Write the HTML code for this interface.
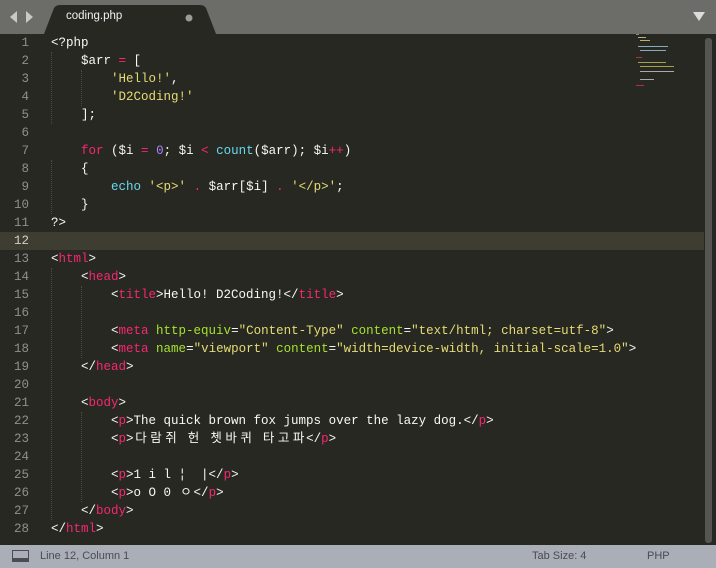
<!DOCTYPE html><html style="overflow:hidden;height:568px"><head><meta charset="utf-8"><style>
body{margin:0;width:716px;height:568px;overflow:hidden;background:#272822;position:relative;font-family:"Liberation Mono","Noto Sans CJK KR",monospace}
#tb{position:absolute;left:0;top:0;width:716px;height:34px;background:#6c6c68}
#st{position:absolute;left:0;top:545px;width:716px;height:23px;background:#aaaeb6;font-family:"Liberation Sans",sans-serif;font-size:11px;color:#4a4c52}
#st span{position:absolute;top:5px}
.ln{position:absolute;left:0;width:29px;text-align:right;color:#8f908a;font-size:12.5px;line-height:18px}
.code{position:absolute;left:51px;top:34px;font-size:12.5px;line-height:18px;color:#f8f8f2}
.code div{height:18px;white-space:pre}
.k{color:#f92672}.s{color:#e6db74}.c{color:#66d9ef}.n{color:#ae81ff}.a{color:#a6e22e}
.h{display:inline-block;width:15px;text-align:center}
.g{position:absolute;border-left:1px dotted #4a4b44;width:0}
</style></head><body>
<div id="tb">
<svg width="716" height="34" style="position:absolute;left:0;top:0">
<polygon points="10,17 17,11 17,23" fill="#c8c8c4"/><polygon points="33,17 26,11 26,23" fill="#c8c8c4"/>
<path d="M44,34 L54,8 Q56,5 60,5 L200,5 Q204,5 206,8 L216,34 Z" fill="#272822"/>
<circle cx="189" cy="18" r="3.5" fill="#9a9a96"/>
<polygon points="693,12 705,12 699,21" fill="#dcdcdc"/>
</svg>
<div style="position:absolute;left:66px;top:10px;font-family:'Liberation Sans',sans-serif;font-size:11.5px;color:#f0f0f0">coding.php</div>
</div>
<div style="position:absolute;left:0;top:232px;width:704px;height:18px;background:#3e3d32"></div>
<div style="position:absolute;left:705px;top:38px;width:7px;height:505px;background:#555551;border-radius:3px"></div>
<div class="g" style="left:51px;top:52px;height:72px"></div>
<div class="g" style="left:81px;top:70px;height:36px"></div>
<div class="g" style="left:51px;top:160px;height:54px"></div>
<div class="g" style="left:51px;top:268px;height:252px"></div>
<div class="g" style="left:81px;top:286px;height:72px"></div>
<div class="g" style="left:81px;top:412px;height:90px"></div>
<div class="code"><div>&lt;?php</div><div>    $arr <span class="k">=</span> [</div><div>        <span class="s">'Hello!'</span>,</div><div>        <span class="s">'D2Coding!'</span></div><div>    ];</div><div> </div><div>    <span class="k">for</span> ($i <span class="k">=</span> <span class="n">0</span>; $i <span class="k">&lt;</span> <span class="c">count</span>($arr); $i<span class="k">++</span>)</div><div>    {</div><div>        <span class="c">echo</span> <span class="s">'&lt;p&gt;'</span> <span class="k">.</span> $arr[$i] <span class="k">.</span> <span class="s">'&lt;/p&gt;'</span>;</div><div>    }</div><div>?&gt;</div><div> </div><div>&lt;<span class="k">html</span>&gt;</div><div>    &lt;<span class="k">head</span>&gt;</div><div>        &lt;<span class="k">title</span>&gt;Hello! D2Coding!&lt;/<span class="k">title</span>&gt;</div><div> </div><div>        &lt;<span class="k">meta</span> <span class="a">http-equiv</span>=<span class="s">"Content-Type"</span> <span class="a">content</span>=<span class="s">"text/html; charset=utf-8"</span>&gt;</div><div>        &lt;<span class="k">meta</span> <span class="a">name</span>=<span class="s">"viewport"</span> <span class="a">content</span>=<span class="s">"width=device-width, initial-scale=1.0"</span>&gt;</div><div>    &lt;/<span class="k">head</span>&gt;</div><div> </div><div>    &lt;<span class="k">body</span>&gt;</div><div>        &lt;<span class="k">p</span>&gt;The quick brown fox jumps over the lazy dog.&lt;/<span class="k">p</span>&gt;</div><div>        &lt;<span class="k">p</span>&gt;<span class="h">다</span><span class="h">람</span><span class="h">쥐</span> <span class="h">헌</span> <span class="h">쳇</span><span class="h">바</span><span class="h">퀴</span> <span class="h">타</span><span class="h">고</span><span class="h">파</span>&lt;/<span class="k">p</span>&gt;</div><div> </div><div>        &lt;<span class="k">p</span>&gt;1 i l ¦  |&lt;/<span class="k">p</span>&gt;</div><div>        &lt;<span class="k">p</span>&gt;o O 0 <span class="h">ㅇ</span>&lt;/<span class="k">p</span>&gt;</div><div>    &lt;/<span class="k">body</span>&gt;</div><div>&lt;/<span class="k">html</span>&gt;</div></div>
<div class="ln" style="top:34px">1<br>2<br>3<br>4<br>5<br>6<br>7<br>8<br>9<br>10<br>11<br><span style="color:#d0d0c8">12</span><br>13<br>14<br>15<br>16<br>17<br>18<br>19<br>20<br>21<br>22<br>23<br>24<br>25<br>26<br>27<br>28</div>
<svg width="40" height="60" style="position:absolute;left:634px;top:33px">
<rect x="2" y="1" width="3" height="1" fill="#888"/><rect x="4" y="4" width="8" height="1" fill="#bbb070"/><rect x="6" y="7" width="10" height="1" fill="#bbb070"/><rect x="4" y="13" width="30" height="1" fill="#8ab"/><rect x="6" y="17" width="26" height="1" fill="#8ab"/><rect x="2" y="24" width="6" height="1" fill="#a34"/><rect x="4" y="29" width="28" height="1" fill="#a0a050"/><rect x="6" y="33" width="45" height="1" fill="#a0a050"/><rect x="6" y="38" width="35" height="1" fill="#aaa"/><rect x="6" y="46" width="14" height="1" fill="#aaa"/><rect x="2" y="52" width="8" height="1" fill="#a34"/>
</svg>
<div id="st">
<svg width="18" height="14" style="position:absolute;left:12px;top:5px"><rect x="0.5" y="0.5" width="16" height="11" fill="none" stroke="#4a4c52"/><rect x="1" y="8" width="15" height="3" fill="#4a4c52"/></svg>
<span style="left:40px">Line 12, Column 1</span>
<span style="left:532px">Tab Size: 4</span>
<span style="left:647px">PHP</span>
</div>
</body></html>
